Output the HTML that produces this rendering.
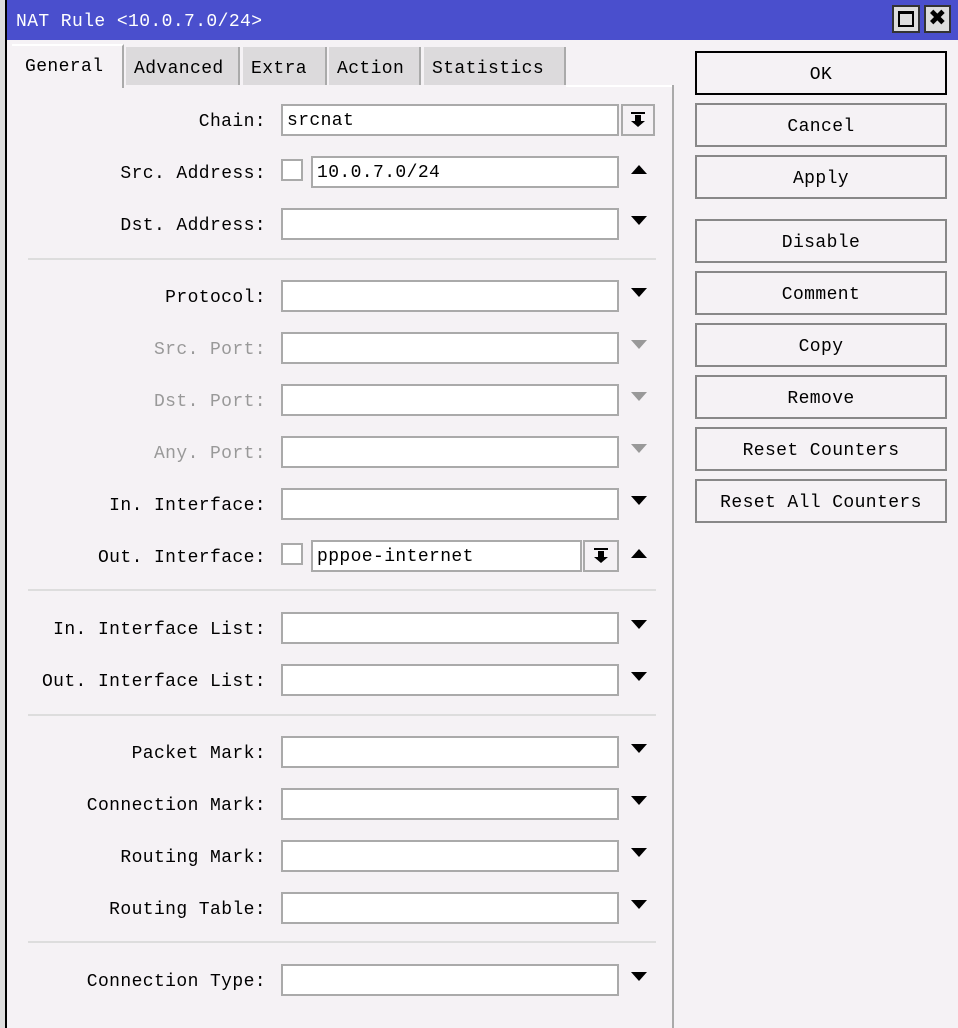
<!DOCTYPE html>
<html><head><style>
*{margin:0;padding:0;box-sizing:border-box}
body{width:958px;height:1028px;background:#f5f2f5;position:relative;overflow:hidden;font-family:"Liberation Mono",monospace;font-size:18px;letter-spacing:0.4px;color:#000}
.a{position:absolute}
.lab{position:absolute;right:692px;text-align:right;white-space:nowrap;line-height:20px;margin-top:2px}
.g{color:#999}
.f{position:absolute;background:#fff;border:2px solid #aaa;height:32px;padding-left:4px;line-height:30px;white-space:nowrap}
.cb{position:absolute;width:22px;height:22px;background:#fff;border:2px solid #aaa}
.sep{position:absolute;left:28px;width:628px;height:2px;background:#ddd}
.dn{position:absolute;left:631px;width:0;height:0;border-left:8px solid transparent;border-right:8px solid transparent;border-top:9px solid #000}
.up{position:absolute;left:631px;width:0;height:0;border-left:8px solid transparent;border-right:8px solid transparent;border-bottom:9px solid #000}
.dn.gg{border-top-color:#999}
.btn{position:absolute;left:695px;width:252px;height:44px;border:2px solid #888;text-align:center;line-height:45px;background:#f5f2f5}
.tab{position:absolute;top:47px;height:38px;background:#dcdadc;border-right:2px solid #aaa;line-height:44px;padding-left:8px}
.dd{position:absolute;width:34px;height:32px;border:2px solid #aaa;background:#f5f2f5}
</style></head><body>
<div class="a" style="left:0;top:0;width:5px;height:1028px;background:#ddd"></div>
<div class="a" style="left:5px;top:0;width:2px;height:1028px;background:#000"></div>
<div class="a" style="left:7px;top:0;width:951px;height:40px;background:#4a4fcd"></div>
<div class="a" style="left:16px;top:11px;color:#fff;line-height:22px">NAT Rule &lt;10.0.7.0/24&gt;</div>
<div class="a" style="left:892px;top:5px;width:28px;height:28px;background:#ddd;border:2px solid #333"><div class="a" style="left:4px;top:4px;width:16px;height:16px;border:2px solid #000;border-top-width:3px"></div></div>
<div class="a" style="left:924px;top:5px;width:27px;height:28px;background:#ddd;border:2px solid #333;text-align:center;line-height:24px;font-weight:bold;font-size:22px;font-family:'DejaVu Sans',sans-serif">✖</div>

<div class="a" style="left:12px;top:44px;width:112px;height:44px;background:#f5f2f5;border-top:2px solid #fff;border-right:2px solid #aaa;line-height:42px;padding-left:13px">General</div>
<div class="tab" style="left:126px;width:114px">Advanced</div>
<div class="tab" style="left:243px;width:84px">Extra</div>
<div class="tab" style="left:329px;width:92px">Action</div>
<div class="tab" style="left:424px;width:142px">Statistics</div>
<div class="a" style="left:566px;top:85px;width:108px;height:2px;background:#fff"></div>
<div class="a" style="left:672px;top:85px;width:2px;height:943px;background:#aaa"></div>

<div class="lab" style="top:110px">Chain:</div>
<div class="f" style="left:281px;top:104px;width:338px">srcnat</div>
<div class="dd" style="left:621px;top:104px"><div class="a" style="left:8px;top:6px;width:14px;height:2px;background:#000"></div><div class="a" style="left:12px;top:9px;width:6px;height:6px;background:#000"></div><div class="a" style="left:8px;top:15px;width:0;height:0;border-left:7px solid transparent;border-right:7px solid transparent;border-top:6px solid #000"></div></div>

<div class="lab" style="top:162px">Src. Address:</div>
<div class="cb" style="left:281px;top:159px"></div>
<div class="f" style="left:311px;top:156px;width:308px">10.0.7.0/24</div>
<div class="up" style="left:631px;top:165px"></div>

<div class="lab" style="top:214px">Dst. Address:</div>
<div class="f" style="left:281px;top:208px;width:338px"></div>
<div class="dn" style="top:216px"></div>
<div class="sep" style="top:258px"></div>

<div class="lab" style="top:286px">Protocol:</div>
<div class="f" style="left:281px;top:280px;width:338px"></div>
<div class="dn" style="top:288px"></div>
<div class="lab g" style="top:338px">Src. Port:</div>
<div class="f" style="left:281px;top:332px;width:338px"></div>
<div class="dn gg" style="top:340px"></div>
<div class="lab g" style="top:390px">Dst. Port:</div>
<div class="f" style="left:281px;top:384px;width:338px"></div>
<div class="dn gg" style="top:392px"></div>
<div class="lab g" style="top:442px">Any. Port:</div>
<div class="f" style="left:281px;top:436px;width:338px"></div>
<div class="dn gg" style="top:444px"></div>
<div class="lab" style="top:494px">In. Interface:</div>
<div class="f" style="left:281px;top:488px;width:338px"></div>
<div class="dn" style="top:496px"></div>
<div class="lab" style="top:546px">Out. Interface:</div>
<div class="cb" style="left:281px;top:543px"></div>
<div class="f" style="left:311px;top:540px;width:271px">pppoe-internet</div>
<div class="dd" style="left:583px;top:540px;width:36px"><div class="a" style="left:9px;top:6px;width:14px;height:2px;background:#000"></div><div class="a" style="left:13px;top:9px;width:6px;height:6px;background:#000"></div><div class="a" style="left:9px;top:15px;width:0;height:0;border-left:7px solid transparent;border-right:7px solid transparent;border-top:6px solid #000"></div></div>
<div class="up" style="left:631px;top:549px"></div>
<div class="sep" style="top:589px"></div>

<div class="lab" style="top:618px">In. Interface List:</div>
<div class="f" style="left:281px;top:612px;width:338px"></div>
<div class="dn" style="top:620px"></div>
<div class="lab" style="top:670px">Out. Interface List:</div>
<div class="f" style="left:281px;top:664px;width:338px"></div>
<div class="dn" style="top:672px"></div>
<div class="sep" style="top:714px"></div>

<div class="lab" style="top:742px">Packet Mark:</div>
<div class="f" style="left:281px;top:736px;width:338px"></div>
<div class="dn" style="top:744px"></div>
<div class="lab" style="top:794px">Connection Mark:</div>
<div class="f" style="left:281px;top:788px;width:338px"></div>
<div class="dn" style="top:796px"></div>
<div class="lab" style="top:846px">Routing Mark:</div>
<div class="f" style="left:281px;top:840px;width:338px"></div>
<div class="dn" style="top:848px"></div>
<div class="lab" style="top:898px">Routing Table:</div>
<div class="f" style="left:281px;top:892px;width:338px"></div>
<div class="dn" style="top:900px"></div>
<div class="sep" style="top:941px"></div>
<div class="lab" style="top:970px">Connection Type:</div>
<div class="f" style="left:281px;top:964px;width:338px"></div>
<div class="dn" style="top:972px"></div>

<div class="btn" style="top:51px;border-color:#000">OK</div>
<div class="btn" style="top:103px">Cancel</div>
<div class="btn" style="top:155px">Apply</div>
<div class="btn" style="top:219px">Disable</div>
<div class="btn" style="top:271px">Comment</div>
<div class="btn" style="top:323px">Copy</div>
<div class="btn" style="top:375px">Remove</div>
<div class="btn" style="top:427px">Reset Counters</div>
<div class="btn" style="top:479px">Reset All Counters</div>
</body></html>
